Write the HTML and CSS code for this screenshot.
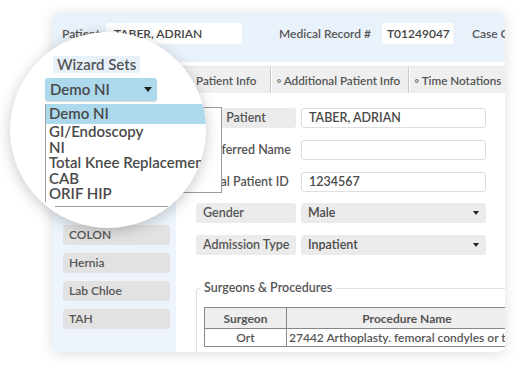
FILE: index.html
```html
<!DOCTYPE html>
<html lang="en">
<head>
  <meta charset="UTF-8" />
  <title>Wizard Sets</title>
  <link rel="stylesheet" href="styles.css">
</head>
<body>
  <div class="stage">
    <div class="card">
      <div class="topbar">
        <span class="top-label">Patient</span>
        <span class="top-input name">TABER, ADRIAN</span>
        <span class="top-label mrn-label">Medical Record #</span>
        <span class="top-input mrn">T01249047</span>
        <span class="top-label case-label">Case Count</span>
      </div>
      <div class="body">
        <aside class="sidebar">
          <div class="side-title">Wizard Sets</div>
          <div class="side-select">Demo NI</div>
          <ul class="menu">
            <li>Demo NI</li>
            <li>GI/Endoscopy</li>
            <li>NI</li>
            <li>Total Knee Replacement</li>
            <li>CAB</li>
            <li>ORIF HIP</li>
          </ul>
          <div class="sets">
            <div class="set-btn">COLON</div>
            <div class="set-btn">Hernia</div>
            <div class="set-btn">Lab Chloe</div>
            <div class="set-btn">TAH</div>
          </div>
        </aside>
        <main class="main">
          <div class="tabs">
            <div class="tab first">Patient Info</div>
            <div class="tab">&#9702; Additional Patient Info</div>
            <div class="tab">&#9702; Time Notations</div>
          </div>
          <div class="form">
            <div class="label boxed center">Patient</div>
            <div class="value">TABER, ADRIAN</div>
            <div class="label">Preferred Name</div>
            <div class="value"></div>
            <div class="label">Total Patient ID</div>
            <div class="value">1234567</div>
            <div class="label boxed">Gender</div>
            <div class="value select">Male</div>
            <div class="label boxed">Admission Type</div>
            <div class="value select">Inpatient</div>
          </div>
          <fieldset class="procs">
            <legend>Surgeons &amp; Procedures</legend>
            <table>
              <thead>
                <tr>
                  <th class="col-surgeon">Surgeon</th>
                  <th class="col-proc">Procedure Name</th>
                </tr>
              </thead>
              <tbody>
                <tr>
                  <td class="center">Ort</td>
                  <td>27442 Arthoplasty. femoral condyles or tibial plateaus</td>
                </tr>
              </tbody>
            </table>
          </fieldset>
        </main>
      </div>
    </div>

    <!-- magnifier over the wizard set picker -->
    <div class="lens">
      <div class="lens-title">Wizard Sets</div>
      <div class="lens-select">Demo NI<span class="caret"></span></div>
      <ul class="lens-list">
        <li class="active">Demo NI</li>
        <li>GI/Endoscopy</li>
        <li>NI</li>
        <li>Total Knee Replacement</li>
        <li>CAB</li>
        <li>ORIF HIP</li>
      </ul>
      <div class="lens-rule"></div>
    </div>
  </div>
</body>
</html>
```

FILE: styles.css
```css
body {
  margin: 0;
  background: #fff;
  font-family: Lato, "Open Sans", sans-serif;
  font-weight: 600;
  color: #555;
}
.stage {
  position: relative;
  padding: 12px 16px 17px 52px;
}
.card {
  width: 453px;
  height: 340px;
  background: #fff;
  border-radius: 7px;
  box-shadow: 0 2px 14px rgba(0,0,0,0.13);
  overflow: hidden;
  display: flex;
  flex-direction: column;
}

/* top patient bar */
.topbar {
  height: 43px;
  padding: 0 0 7px 10px;
  background: #e9f2fb;
  display: flex;
  align-items: center;
  font-size: 12px;
  white-space: nowrap;
}
.topbar > span { flex-shrink: 0; }
.top-input {
  height: 21px;
  line-height: 21px;
  background: #fff;
  border-radius: 2px;
  margin-left: 6px;
  padding-left: 8px;
  box-sizing: border-box;
  color: #444;
}
.top-input.name { width: 136px; }
.mrn-label { margin-left: 37px; }
.top-input.mrn { width: 71px; margin-left: 11px; padding-left: 5px; }
.case-label { margin-left: 19px; }

.body {
  flex: 1;
  display: grid;
  grid-template-columns: 124px 1fr;
  min-height: 0;
}

/* left wizard column */
.sidebar {
  position: relative;
  background: #edf4fc;
  padding: 8px 6px 0 11px;
  font-size: 12px;
}
.side-title {
  line-height: 16px;
  margin-bottom: 3px;
}
.side-select {
  height: 18px;
  line-height: 18px;
  background: #acd9ec;
  border-radius: 3px;
  padding-left: 4px;
}
.menu {
  position: absolute;
  left: 11px;
  top: 45px;
  width: 157px;
  height: 84px;
  margin: 0;
  padding: 0;
  list-style: none;
  background: #fff;
  border: 1px solid #9c9c9c;
  z-index: 1;
  font-size: 11px;
  color: #444;
}
.menu li {
  line-height: 14px;
  padding-left: 3px;
}
.sets {
  margin-top: 118px;
  display: flex;
  flex-direction: column;
  gap: 8px;
}
.set-btn {
  height: 20px;
  line-height: 20px;
  padding-left: 6px;
  background: #e2e2e2;
  border-radius: 3px;
}

/* main form */
.main {
  overflow: hidden;
  font-size: 12.5px;
}
.tabs {
  margin-top: 4px;
  height: 26px;
  background: #efefef;
  border-top: 1px solid #e6e6e6;
  display: flex;
  white-space: nowrap;
  font-size: 11.7px;
}
.tab {
  flex-shrink: 0;
  line-height: 26px;
  padding: 0 8px 0 5px;
  border-left: 1px solid #c8c8c8;
  box-shadow: inset 1px 0 0 #fff;
}
.tab.first {
  padding: 0 14px 0 20px;
  border-left: 0;
  box-shadow: none;
}
.form {
  display: grid;
  grid-template-columns: 100px 185px;
  grid-auto-rows: 20px;
  column-gap: 5px;
  row-gap: 11.75px;
  padding: 15px 0 0 20px;
}
.label {
  line-height: 20px;
  padding-left: 7px;
  white-space: nowrap;
  overflow: hidden;
}
.label.boxed {
  background: #ebebeb;
  border-radius: 3px;
}
.center { text-align: center; }
.label.center { padding-left: 0; }
.value {
  line-height: 18px;
  padding: 0 7px;
  background: #fff;
  border: 1px solid #dedede;
  border-radius: 3px;
  color: #4a4a4a;
}
.value.select {
  line-height: 20px;
  border: 0;
  background: #ebebeb;
  display: flex;
  justify-content: space-between;
  align-items: center;
}
.value.select::after {
  content: "";
  border-left: 3.5px solid transparent;
  border-right: 3.5px solid transparent;
  border-top: 4px solid #222;
}

.procs {
  margin: 25px 0 0 20px;
  padding: 11px 0 10px 7px;
  width: 360px;
  border: 1px solid #e0e0e0;
  border-radius: 3px;
}
.procs legend {
  padding: 0 4px;
  margin-left: -4px;
  line-height: 16px;
}
table {
  table-layout: fixed;
  width: 324px;
  border-collapse: collapse;
  border: 1px solid #888;
  white-space: nowrap;
  font-size: 12px;
}
th, td {
  border: 1px solid #888;
  padding: 0 2px;
  text-align: left;
}
th {
  height: 20px;
  background: #eee;
  text-align: center;
}
td { height: 17px; }
.col-surgeon { width: 77px; }

/* magnifier circle */
.lens {
  position: absolute;
  left: 10px;
  top: 32px;
  width: 196px;
  height: 196px;
  box-sizing: border-box;
  padding: 23px 0 0 35px;
  border-radius: 50%;
  background: #fff;
  overflow: hidden;
  box-shadow: 0 3px 14px rgba(0,0,0,0.22);
  z-index: 2;
  font-size: 15px;
  color: #4a4a4a;
}
.lens-title {
  display: inline-block;
  margin-left: 8px;
  padding: 0 4px;
  line-height: 17px;
  background: #e8f1fa;
  color: #555;
}
.lens-select {
  margin-top: 5px;
  width: 112px;
  height: 23px;
  line-height: 23px;
  box-sizing: border-box;
  padding: 0 5px;
  background: #acd9ec;
  border-radius: 3px;
  box-shadow: 0 1px 1px rgba(0,0,0,0.15);
  display: flex;
  justify-content: space-between;
  align-items: center;
}
.caret {
  border-left: 4px solid transparent;
  border-right: 4px solid transparent;
  border-top: 5px solid #222;
}
.lens-list {
  margin: 3px 0 0;
  padding: 0;
  width: 190px;
  list-style: none;
  border-left: 1px solid #a0a0a0;
  white-space: nowrap;
}
.lens-list li {
  line-height: 15.6px;
  padding-left: 3px;
}
.lens-list li.active {
  padding-top: 2px;
  padding-bottom: 2.4px;
  background: #acd9ec;
}
.lens-rule {
  margin: 4px 0 0 10px;
  width: 113px;
  border-top: 1px solid #9a9a9a;
}
```
